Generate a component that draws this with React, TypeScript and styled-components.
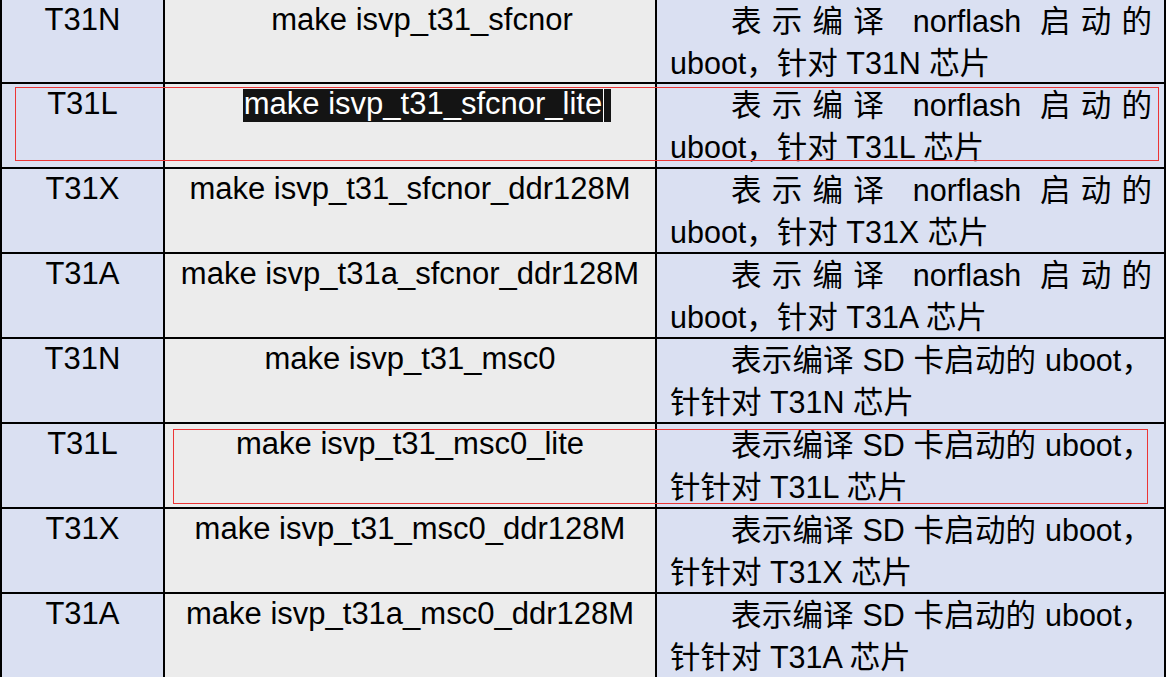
import { createGlobalStyle, styled } from "styled-components";

const GlobalStyle = createGlobalStyle`
  html, body {
    margin: 0;
    padding: 0;
    background: #ffffff;
    overflow: hidden;
  }
  body {
    font-family: "Liberation Sans", Arial, "Noto Sans CJK SC", sans-serif;
    color: #000;
  }
`;

const TableWrapper = styled.div`
  width: 1166px;
  border-left: 2px solid #000;
  display: flex;
  flex-direction: column;
`;

const Row = styled.div<{ first?: boolean }>`
  position: relative;
  display: grid;
  grid-template-columns: 163px 492px 509px;
  height: ${(p) => (p.first ? 84 : 85)}px;
`;

const Cell = styled.div<{ tone: "blue" | "grey" }>`
  box-sizing: border-box;
  border-right: 2px solid #000;
  border-bottom: 2px solid #000;
  background: ${(p) => (p.tone === "blue" ? "#dae0f2" : "#ececec")};
  overflow: hidden;
`;

const ChipCell = styled(Cell)`
  padding-top: 2px;
  font-size: 31px;
  text-align: center;
  line-height: normal;
`;

const CommandCell = styled(Cell)<{ shift?: number }>`
  padding-top: 2px;
  padding-left: ${(p) => p.shift ?? 0}px;
  font-size: 31px;
  text-align: center;
  line-height: normal;
  white-space: nowrap;
`;

const DescCell = styled(Cell)`
  padding: 0 12px 0 13px;
  font-size: 30.5px;
  line-height: 42px;
  text-align: justify;
  text-indent: 2em;
`;

const Selected = styled.span`
  display: inline-block;
  height: 33px;
  line-height: 30px;
  padding-left: 1px;
  background: #141414;
  color: #fff;
`;

const Caret = styled.span`
  display: inline-block;
  vertical-align: top;
  width: 1px;
  height: 33px;
  margin-left: 1px;
  margin-right: 7px;
  background: #fff;
`;

const Mark = styled.div`
  position: absolute;
  box-sizing: border-box;
  border: 1px solid #ec3535;
  pointer-events: none;
`;

interface RowData {
  chip: string;
  cmd: string;
  desc: string;
  shift?: number;
  selected?: boolean;
  mark?: { left: number; top: number; width: number; height: number };
}

const rows: RowData[] = [
  {
    chip: "T31N",
    cmd: "make isvp_t31_sfcnor",
    desc: "表示编译 norflash 启动的 uboot，针对 T31N 芯片",
    shift: 24,
  },
  {
    chip: "T31L",
    cmd: "make isvp_t31_sfcnor_lite",
    desc: "表示编译 norflash 启动的 uboot，针对 T31L 芯片",
    shift: 34,
    selected: true,
    mark: { left: 13, top: 3, width: 1144, height: 74 },
  },
  {
    chip: "T31X",
    cmd: "make isvp_t31_sfcnor_ddr128M",
    desc: "表示编译 norflash 启动的 uboot，针对 T31X 芯片",
  },
  {
    chip: "T31A",
    cmd: "make isvp_t31a_sfcnor_ddr128M",
    desc: "表示编译 norflash 启动的 uboot，针对 T31A 芯片",
  },
  {
    chip: "T31N",
    cmd: "make isvp_t31_msc0",
    desc: "表示编译 SD 卡启动的 uboot，针针对 T31N 芯片",
  },
  {
    chip: "T31L",
    cmd: "make isvp_t31_msc0_lite",
    desc: "表示编译 SD 卡启动的 uboot，针针对 T31L 芯片",
    mark: { left: 171, top: 5, width: 975, height: 75 },
  },
  {
    chip: "T31X",
    cmd: "make isvp_t31_msc0_ddr128M",
    desc: "表示编译 SD 卡启动的 uboot，针针对 T31X 芯片",
  },
  {
    chip: "T31A",
    cmd: "make isvp_t31a_msc0_ddr128M",
    desc: "表示编译 SD 卡启动的 uboot，针针对 T31A 芯片",
  },
];

export default function App(): JSX.Element {
  return (
    <>
      <GlobalStyle />
      <TableWrapper>
        {rows.map((r, i) => (
          <Row key={i} first={i === 0}>
            <ChipCell tone="blue">{r.chip}</ChipCell>
            <CommandCell tone="grey" shift={r.shift}>
              {r.selected ? (
                <Selected>
                  {r.cmd}
                  <Caret />
                </Selected>
              ) : (
                r.cmd
              )}
            </CommandCell>
            <DescCell tone="blue">{r.desc}</DescCell>
            {r.mark && (
              <Mark
                style={{
                  left: r.mark.left,
                  top: r.mark.top,
                  width: r.mark.width,
                  height: r.mark.height,
                }}
              />
            )}
          </Row>
        ))}
      </TableWrapper>
    </>
  );
}
